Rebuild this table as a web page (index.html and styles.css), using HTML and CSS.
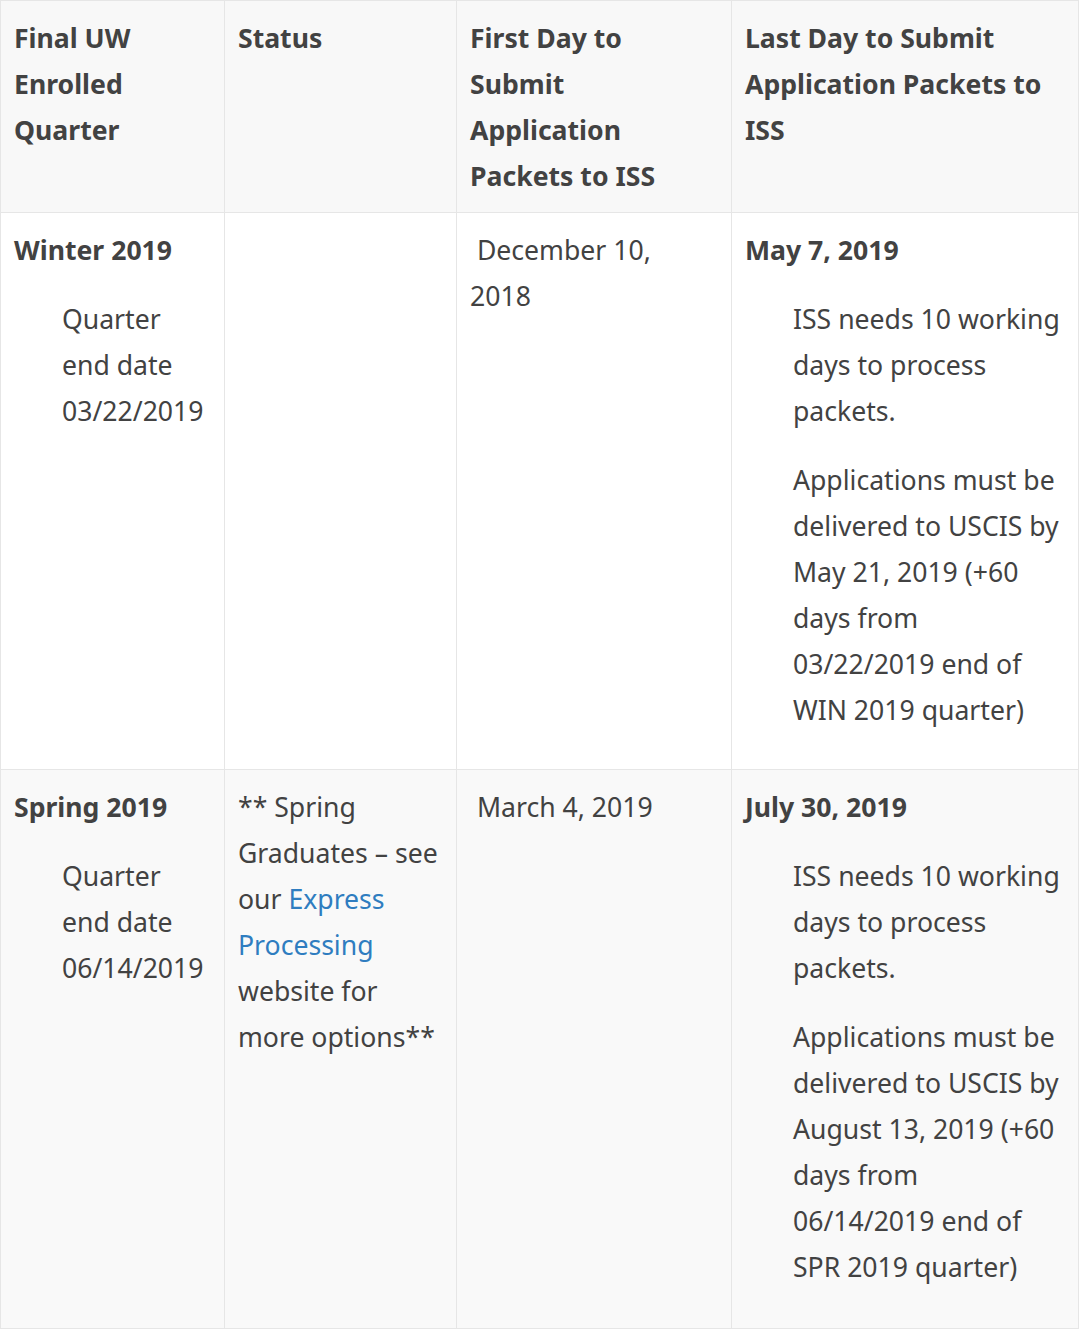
FILE: index.html
```html
<!DOCTYPE html>
<html lang="en">
<head>
<meta charset="utf-8">
<title>ISS deadlines</title>
<link rel="stylesheet" href="styles.css">
</head>
<body>
<table class="deadlines">
  <colgroup>
    <col class="c1">
    <col class="c2">
    <col class="c3">
    <col class="c4">
  </colgroup>
  <thead>
    <tr class="head">
      <th>Final UW Enrolled Quarter</th>
      <th>Status</th>
      <th>First Day to Submit Application Packets to ISS</th>
      <th>Last Day to Submit Application Packets to ISS</th>
    </tr>
  </thead>
  <tbody>
    <tr class="row-white">
      <td>
        <p><strong>Winter 2019</strong></p>
        <blockquote class="note"><p>Quarter end date 03/22/2019</p></blockquote>
      </td>
      <td></td>
      <td><p>&nbsp;December 10, 2018</p></td>
      <td>
        <p><strong>May 7, 2019</strong></p>
        <blockquote class="note">
          <p>ISS needs 10 working days to process packets.</p>
          <p>Applications must be delivered to USCIS by May 21, 2019 (+60 days from 03/22/2019 end of WIN 2019 quarter)</p>
        </blockquote>
      </td>
    </tr>
    <tr class="row-gray">
      <td>
        <p><strong>Spring 2019</strong></p>
        <blockquote class="note"><p>Quarter end date 06/14/2019</p></blockquote>
      </td>
      <td><p>** Spring Graduates – see our <a href="#">Express Processing</a> website for more options**</p></td>
      <td><p>&nbsp;March 4, 2019</p></td>
      <td>
        <p><strong>July 30, 2019</strong></p>
        <blockquote class="note">
          <p>ISS needs 10 working days to process packets.</p>
          <p>Applications must be delivered to USCIS by August 13, 2019 (+60 days from 06/14/2019 end of SPR 2019 quarter)</p>
        </blockquote>
      </td>
    </tr>
  </tbody>
</table>
</body>
</html>
```

FILE: styles.css
```css
html, body {
  margin: 0;
  padding: 0;
  background: #ffffff;
}

body {
  font-family: "Noto Sans", "Open Sans", "DejaVu Sans", sans-serif;
  font-size: 26.6px;
  line-height: 46px;
  color: #424242;
}

.deadlines {
  width: 1078px;
  border-collapse: collapse;
  table-layout: fixed;
  border: 1px solid #e6e6e6;
}

.c1 { width: 224px; }
.c2 { width: 232px; }
.c3 { width: 275px; }
.c4 { width: 347px; }

.deadlines th,
.deadlines td {
  border: 1px solid #e6e6e6;
  padding: 14px 14px 13px 13px;
  vertical-align: top;
  text-align: left;
}

.deadlines th {
  font-weight: 700;
}

.head {
  background: #f8f8f8;
}

.row-white {
  background: #ffffff;
}

.row-gray {
  background: #f9f9f9;
}

.row-gray td {
  padding-bottom: 15px;
}

.deadlines p {
  margin: 0 0 23px 0;
}

.deadlines strong {
  font-weight: 700;
}

.note {
  margin: 0 0 0 48px;
  padding: 0;
}

.deadlines a {
  color: #2f7dc0;
  text-decoration: none;
}
```
